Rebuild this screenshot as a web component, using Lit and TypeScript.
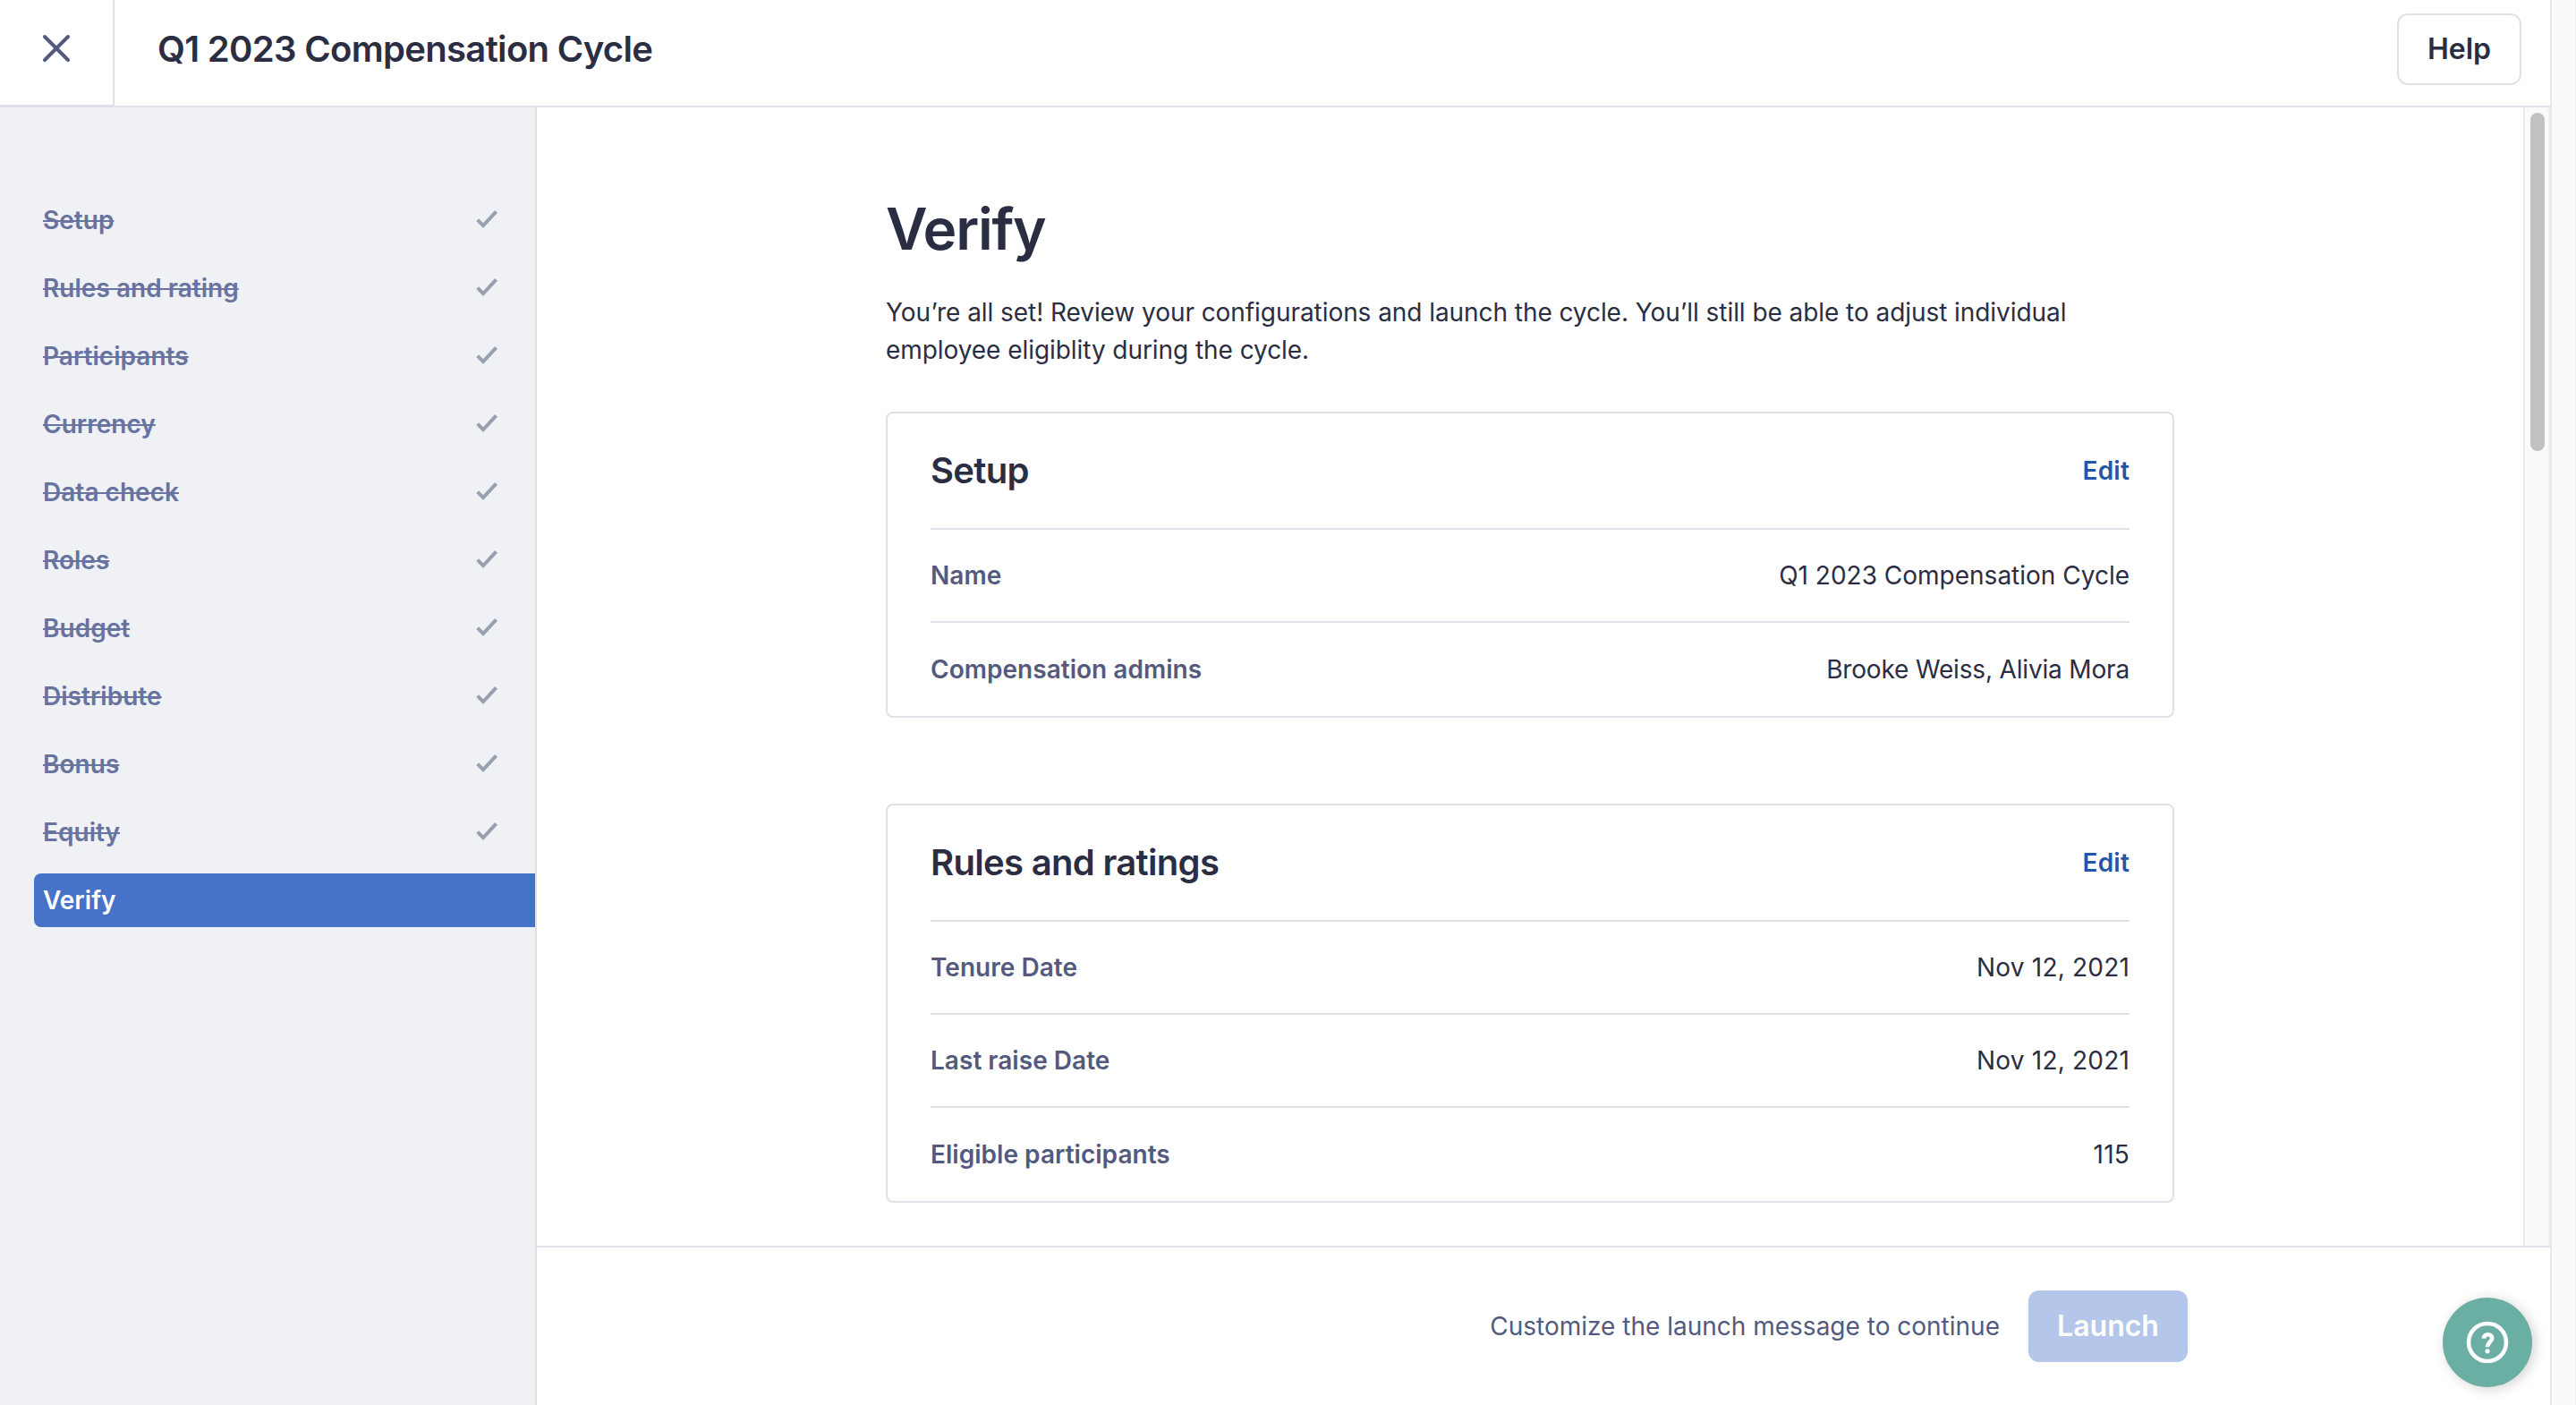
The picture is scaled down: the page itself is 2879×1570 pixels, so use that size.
import { LitElement, html, css } from 'lit';
import { customElement, property, state } from 'lit/decorators.js';
import { classMap } from 'lit/directives/class-map.js';

interface Step {
  label: string;
  done: boolean;
}

interface Row {
  label: string;
  value: string;
  kind?: 'number' | 'people';
}

@customElement('step-list')
export class StepList extends LitElement {
  @property({ attribute: false }) steps: Step[] = [];
  @property() active = '';

  static styles = css`
    :host {
      display: flex;
      flex-direction: column;
      gap: 16px;
      padding: 96px 0 0 38px;
    }

    .step {
      display: flex;
      align-items: center;
      justify-content: space-between;
      height: 60px;
      padding: 0 40px 0 10px;
      box-sizing: border-box;
      border-radius: 8px 0 0 8px;
      color: #6873a0;
      font-weight: 600;
      letter-spacing: 0.001em;
    }

    .step.done .label {
      text-decoration: line-through;
    }

    .step.active {
      background: #4672c8;
      color: #fff;
    }

    svg {
      display: block;
      width: 28px;
      height: 28px;
    }
  `;

  render() {
    return this.steps.map(
      (step) => html`
        <div class=${classMap({ step: true, done: step.done, active: step.label === this.active })}>
          <span class="label">${step.label}</span>
          ${step.done
            ? html`<svg viewBox="0 0 28 28" fill="none" stroke="#97a1af" stroke-width="4">
                <path d="M3.7 13.7 L10 20 L24.6 4.4" />
              </svg>`
            : ''}
        </div>
      `
    );
  }
}

@customElement('summary-card')
export class SummaryCard extends LitElement {
  @property() heading = '';
  @property({ attribute: false }) rows: Row[] = [];

  static styles = css`
    :host {
      display: block;
      padding: 0 48px;
      border: 2px solid #dfe1e9;
      border-radius: 8px;
    }

    .head {
      display: flex;
      align-items: center;
      justify-content: space-between;
      height: 128px;
    }

    h2 {
      margin: 0;
      font-size: 40px;
      font-weight: 600;
      letter-spacing: -0.017em;
    }

    .edit {
      color: #2156a8;
      font-weight: 600;
      letter-spacing: 0.008em;
    }

    .row {
      display: flex;
      align-items: center;
      justify-content: space-between;
      height: 102px;
      border-top: 2px solid #dfe1e9;
    }

    .row:last-child {
      height: 104px;
    }

    .label {
      color: #535a7e;
      font-weight: 600;
      letter-spacing: 0.001em;
    }

    .number {
      letter-spacing: 0.007em;
    }

    .people {
      letter-spacing: -0.006em;
    }
  `;

  render() {
    return html`
      <div class="head">
        <h2>${this.heading}</h2>
        <span class="edit">Edit</span>
      </div>
      ${this.rows.map(
        (row) => html`
          <div class="row">
            <span class="label">${row.label}</span>
            <span class=${row.kind ?? ''}>${row.value}</span>
          </div>
        `
      )}
    `;
  }
}

@customElement('app-root')
export class AppRoot extends LitElement {
  @state() steps: Step[] = [
    ...['Setup', 'Rules and rating', 'Participants', 'Currency', 'Data check', 'Roles', 'Budget', 'Distribute', 'Bonus', 'Equity'].map(
      (label) => ({ label, done: true })
    ),
    { label: 'Verify', done: false },
  ];

  @state() setup: Row[] = [
    { label: 'Name', value: 'Q1 2023 Compensation Cycle' },
    { label: 'Compensation admins', value: 'Brooke Weiss, Alivia Mora', kind: 'people' },
  ];

  @state() rules: Row[] = [
    { label: 'Tenure Date', value: 'Nov 12, 2021', kind: 'number' },
    { label: 'Last raise Date', value: 'Nov 12, 2021', kind: 'number' },
    { label: 'Eligible participants', value: '115', kind: 'number' },
  ];

  static styles = css`
    :host {
      display: flex;
      position: relative;
      height: 1570px;
      overflow: hidden;
      background: #fff;
      color: #2b2d42;
      font-family: Inter, 'Liberation Sans', sans-serif;
      font-size: 28px;
      line-height: 42px;
    }

    .page {
      flex: 1;
      min-width: 0;
      display: flex;
      flex-direction: column;
    }

    /* Header */
    header {
      display: flex;
      align-items: stretch;
      height: 118px;
      border-bottom: 2px solid #dfe1e9;
    }

    .close {
      display: flex;
      align-items: center;
      width: 128px;
      box-sizing: border-box;
      padding: 0 0 10px 47px;
      border-right: 2px solid #dfe1e9;
      box-shadow: inset 0 -1px #dfe1e9;
    }

    .close svg {
      width: 32px;
      height: 32px;
    }

    h1 {
      flex: 1;
      margin: 0;
      padding: 30px 0 0 48px;
      font-size: 40px;
      font-weight: 600;
      line-height: 50px;
      letter-spacing: -0.017em;
    }

    button {
      height: 80px;
      padding: 0;
      border-radius: 12px;
      font: inherit;
      font-size: 32px;
      font-weight: 600;
    }

    .help {
      width: 139px;
      margin: 15px 32px 0 0;
      border: 2px solid #dfe1e9;
      background: #fff;
      color: inherit;
    }

    /* Body */
    .body {
      flex: 1;
      min-height: 0;
      display: flex;
    }

    step-list {
      width: 560px;
      background: #f0f1f5;
      border-right: 2px solid #dfe1e9;
    }

    .main {
      flex: 1;
      min-width: 0;
      display: flex;
      flex-direction: column;
    }

    .scroll {
      flex: 1;
      min-height: 0;
      display: flex;
      justify-content: space-between;
    }

    .content {
      width: 1440px;
      padding: 96px 0 0 390px;
    }

    .content h3 {
      margin: 0;
      font-size: 64px;
      font-weight: 600;
      line-height: 80px;
      letter-spacing: -0.02em;
    }

    .content p {
      margin: 32px 0 48px;
      width: 1400px;
      letter-spacing: -0.0022em;
    }

    summary-card + summary-card {
      margin-top: 96px;
    }

    .track {
      width: 26px;
      padding-top: 6px;
      border: solid #e8e8e8;
      border-width: 0 2px;
      border-right-color: #eee;
      background: #fafafa;
    }

    .thumb {
      width: 16px;
      height: 378px;
      margin-left: 6px;
      border-radius: 8px;
      background: #c1c1c1;
    }

    .outer {
      width: 26px;
      border-left: 2px solid #e8e8e8;
      border-right: 1px solid #ededed;
      background: #fafafa;
    }

    footer {
      display: flex;
      align-items: flex-start;
      justify-content: flex-end;
      gap: 32px;
      height: 128px;
      padding: 48px 405px 0 0;
      border-top: 2px solid #dfe1e9;
      color: #535a7e;
      line-height: 80px;
    }

    .launch {
      width: 178px;
      border: 0;
      background: #b4c6e9;
      color: #fff;
    }

    /* Floating help bubble */
    .bubble {
      position: absolute;
      right: 49px;
      bottom: 20px;
      width: 100px;
      height: 100px;
      border-radius: 50%;
      background: #6aaea4;
      box-shadow: 3px 2px 14px rgba(0, 0, 0, 0.18);
    }

    .bubble svg {
      display: block;
      width: 100px;
      height: 100px;
    }
  `;

  render() {
    return html`
      <div class="page">
        <header>
          <div class="close">
            <svg viewBox="0 0 32 32" fill="none" stroke="#535a7e" stroke-width="4" stroke-linecap="round">
              <path d="M3 3 L29 29 M29 3 L3 29" />
            </svg>
          </div>
          <h1>Q1 2023 Compensation Cycle</h1>
          <button class="help">Help</button>
        </header>
        <div class="body">
          <step-list .steps=${this.steps} active="Verify"></step-list>
          <div class="main">
            <div class="scroll">
              <div class="content">
                <h3>Verify</h3>
                <p>
                  You’re all set! Review your configurations and launch the cycle. You’ll still be able to adjust
                  individual employee eligiblity during the cycle.
                </p>
                <summary-card heading="Setup" .rows=${this.setup}></summary-card>
                <summary-card heading="Rules and ratings" .rows=${this.rules}></summary-card>
              </div>
              <div class="track"><div class="thumb"></div></div>
            </div>
            <footer>
              <span>Customize the launch message to continue</span>
              <button class="launch">Launch</button>
            </footer>
          </div>
        </div>
      </div>
      <div class="outer"></div>
      <div class="bubble">
        <svg viewBox="0 0 100 100" fill="none" stroke="#fff" stroke-width="4.6">
          <circle cx="50" cy="50" r="21" />
          <path d="M45.8 45.6 C46 39.8 55.2 39.8 55.2 45.6 C55.2 49.6 50 50 50 55.2" />
          <circle cx="50" cy="59.8" r="2.6" fill="#fff" stroke="none" />
        </svg>
      </div>
    `;
  }
}
